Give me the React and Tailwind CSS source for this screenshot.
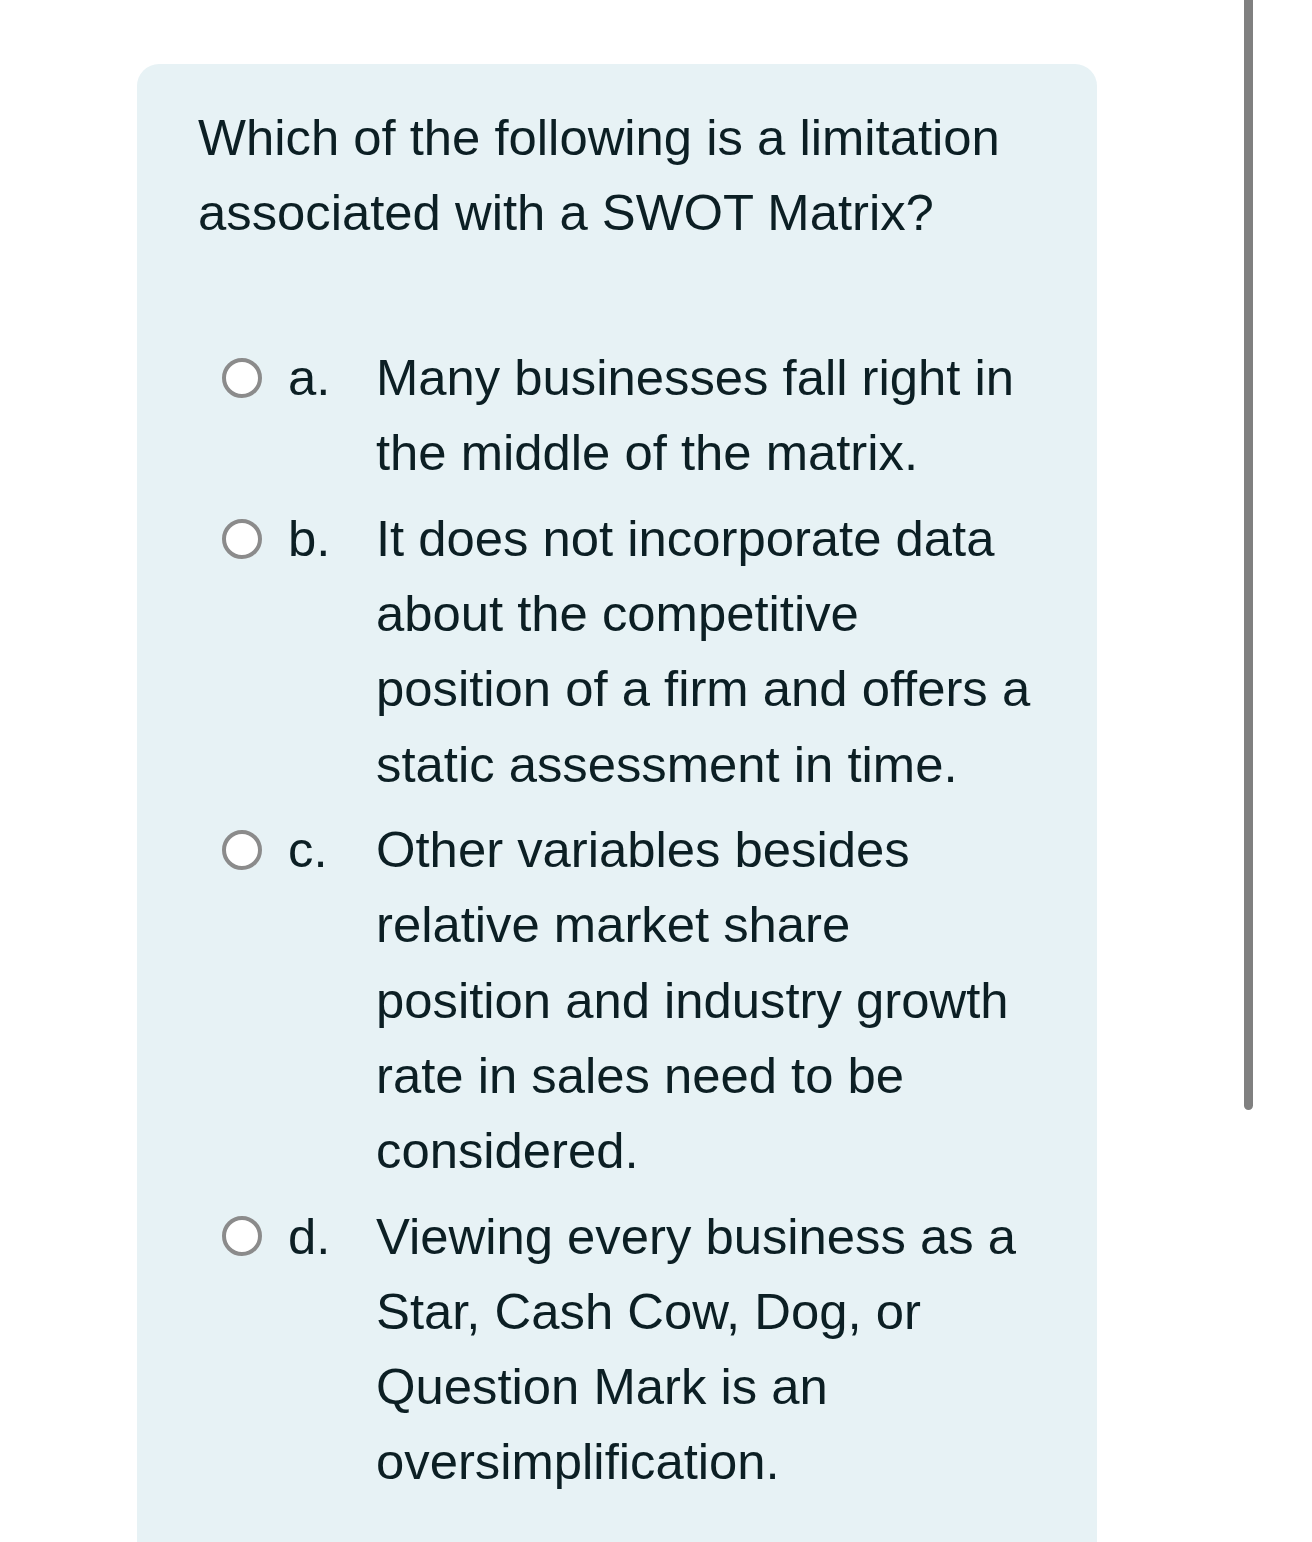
const OPTIONS = [
    { key: "a.", text: "Many businesses fall right in the middle of the matrix." },
    {
        key: "b.",
        text: "It does not incorporate data about the competitive position of a firm and offers a static assessment in time.",
    },
    {
        key: "c.",
        text: "Other variables besides relative market share position and industry growth rate in sales need to be considered.",
    },
    {
        key: "d.",
        text: "Viewing every business as a Star, Cash Cow, Dog, or Question Mark is an oversimplification.",
    },
];

const App = () => {
    return (
        <div
            className="relative h-[1542px] w-full overflow-hidden bg-white text-[#0c1f24]"
            style={{ fontFamily: '"Liberation Sans", Arial, Helvetica, sans-serif' }}
        >
            <div className="ml-[137px] mt-[64px] w-[960px] rounded-t-[22px] bg-[#e7f2f5] px-[61px] pb-[200px] pt-[37px]">
                <p className="text-[50.8px] leading-[74.5px]">
                    Which of the following is a limitation associated with a SWOT Matrix?
                </p>

                <div className="mt-[90px] space-y-[10.5px] pl-[24px]">
                    {OPTIONS.map((o) => (
                        <div key={o.key} className="flex items-start text-[50.8px] leading-[75.2px]">
                            <div className="flex h-[75.2px] w-[66px] shrink-0 items-center">
                                <span className="block h-[40px] w-[40px] rounded-full border-[4px] border-[#8b8b8b] bg-white" />
                            </div>
                            <span className="w-[88px] shrink-0">{o.key}</span>
                            <span className="flex-1">{o.text}</span>
                        </div>
                    ))}
                </div>
            </div>

            {/* scroll indicator */}
            <div className="absolute left-[1244px] top-0 h-[1110px] w-[9px] rounded-b-full bg-[#808080]" />
        </div>
    );
};

export default App;
